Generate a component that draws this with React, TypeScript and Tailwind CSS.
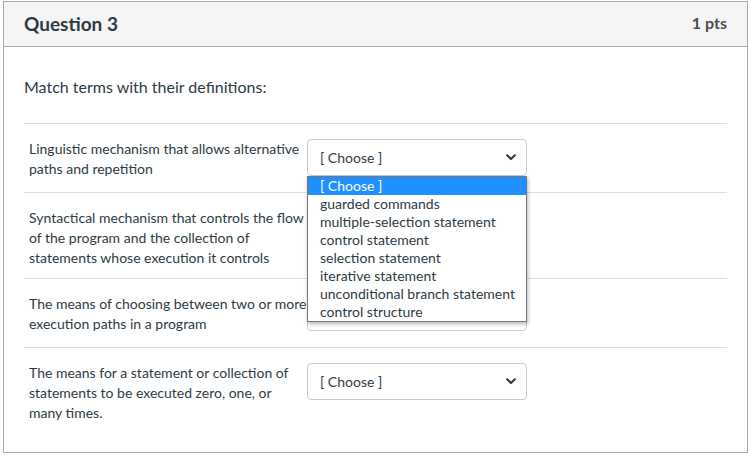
import React from "react";

const options = [
  "[ Choose ]",
  "guarded commands",
  "multiple-selection statement",
  "control statement",
  "selection statement",
  "iterative statement",
  "unconditional branch statement",
  "control structure",
];

const rows = [
  {
    text: "Linguistic mechanism that allows alternative paths and repetition",
    h: "h-[69px]",
    open: true,
  },
  {
    text: "Syntactical mechanism that controls the flow of the program and the collection of statements whose execution it controls",
    h: "h-[86px]",
  },
  {
    text: "The means of choosing between two or more execution paths in a program",
    h: "h-[69px]",
  },
  {
    text: "The means for a statement or collection of statements to be executed zero, one, or many times.",
    h: "h-[76px]",
  },
];

function Chevron() {
  return (
    <svg width="10" height="7" viewBox="0 0 10 7" className="shrink-0">
      <path
        d="M1.2 1.3 L5 5 L8.8 1.3"
        fill="none"
        stroke="#2d3b45"
        strokeWidth="2.2"
        strokeLinecap="round"
        strokeLinejoin="round"
      />
    </svg>
  );
}

function Select({ open }: { open?: boolean }) {
  return (
    <div className="relative w-[220px] shrink-0">
      <div className="flex h-[37px] items-center justify-between rounded-[4px] border border-[#c7cdd1] bg-white pl-[12px] pr-[10px] text-[14px] text-[#2d3b45]">
        <span>[ Choose ]</span>
        <Chevron />
      </div>
      {open && (
        <ul className="absolute left-0 top-[37px] z-10 w-[220px] border border-[#767676] bg-white shadow-[1px_2px_4px_rgba(0,0,0,0.3)]">
          {options.map((o, i) => (
            <li
              key={o}
              className={`h-[18px] pl-[12px] text-[14px] leading-[18px] ${
                i === 0 ? "bg-[#1e90ff] text-white" : "text-[#2d3b45]"
              }`}
            >
              {o}
            </li>
          ))}
        </ul>
      )}
    </div>
  );
}

export default function App() {
  return (
    <div
      className="h-[461px] w-[751px] bg-white pl-[3px] pt-[1px]"
      style={{ fontFamily: "Lato, 'Liberation Sans', sans-serif" }}
    >
      <div className="w-[745px] border border-[#a9a9a9] text-[#2d3b45]">
        <div className="flex h-[45px] items-center justify-between border-b border-[#a9a9a9] bg-[#f5f5f5] px-[20px] pb-[2px]">
          <h2 className="text-[19px] font-bold leading-none">Question 3</h2>
          <span className="text-[16px] font-bold text-[#4a4f53]">1 pts</span>
        </div>
        <div className="px-[20px] pb-[29px]">
          <p className="pb-[24px] pt-[28px] text-[16px] leading-[24px]">
            Match terms with their definitions:
          </p>
          <div>
            {rows.map((r) => (
              <div
                key={r.text}
                className={`flex items-start border-t border-[#dedede] pl-[5px] pt-[15px] ${r.h}`}
              >
                <p className="w-[278px] text-[14px] leading-[20px]">{r.text}</p>
                <Select open={r.open} />
              </div>
            ))}
          </div>
        </div>
      </div>
    </div>
  );
}
